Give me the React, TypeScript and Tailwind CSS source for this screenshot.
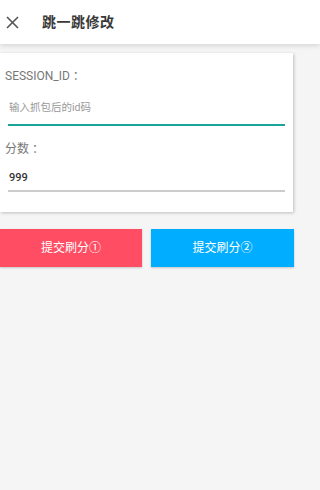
import React from "react";

export default function App() {
  const font = { fontFamily: 'Roboto, "Noto Sans CJK SC", sans-serif' };
  const colon = { fontFamily: '"Noto Sans CJK TC", sans-serif' };
  return (
    <div className="w-full min-h-screen bg-[#f5f5f5] flex flex-col" style={font}>
      <div className="h-[44px] bg-white flex items-center shadow-[0_2px_5px_rgba(0,0,0,0.12)] relative z-10">
        <svg className="ml-[6px]" width="13" height="13" viewBox="0 0 13 13">
          <path d="M1 1L12 12M12 1L1 12" stroke="#555" strokeWidth="1.6" fill="none" />
        </svg>
        <span className="ml-[23px] text-[14px] font-bold text-[#3a3a3a] tracking-[0.5px]">跳一跳修改</span>
      </div>
      <div className="mt-[9px] w-[293px] bg-white shadow-[1px_1px_3px_rgba(0,0,0,0.22)] pt-[16px] pb-[20px]">
        <div className="pl-[5px] h-[14px] flex items-center text-[12px] text-[#777]">
          SESSION_ID<span style={colon}>：</span>
        </div>
        <div className="mx-[8px] mt-[17px] h-[16px] flex items-center text-[10.5px] text-[#999] pl-[1px]">输入抓包后的id码</div>
        <div className="mx-[8px] mt-[8px] h-[2px] bg-[#1aa398]"></div>
        <div className="pl-[5px] mt-[16px] h-[14px] flex items-center text-[12px] text-[#777]">
          分数<span style={colon}>：</span>
        </div>
        <div className="mx-[8px] mt-[14px] h-[16px] flex items-center text-[11px] font-medium text-[#333] pl-[1px]">999</div>
        <div className="mx-[8px] mt-[4px] h-[2px] bg-[#cccccc]"></div>
      </div>
      <div className="mt-[17px] flex gap-[9px]">
        <div className="w-[142px] h-[38px] bg-[#ff4d64] flex items-center justify-center text-white text-[12px] shadow-[0_1px_2px_rgba(0,0,0,0.2)]">
          提交刷分①
        </div>
        <div className="w-[143px] h-[38px] bg-[#00adff] flex items-center justify-center text-white text-[12px] shadow-[0_1px_2px_rgba(0,0,0,0.2)]">
          提交刷分②
        </div>
      </div>
    </div>
  );
}
